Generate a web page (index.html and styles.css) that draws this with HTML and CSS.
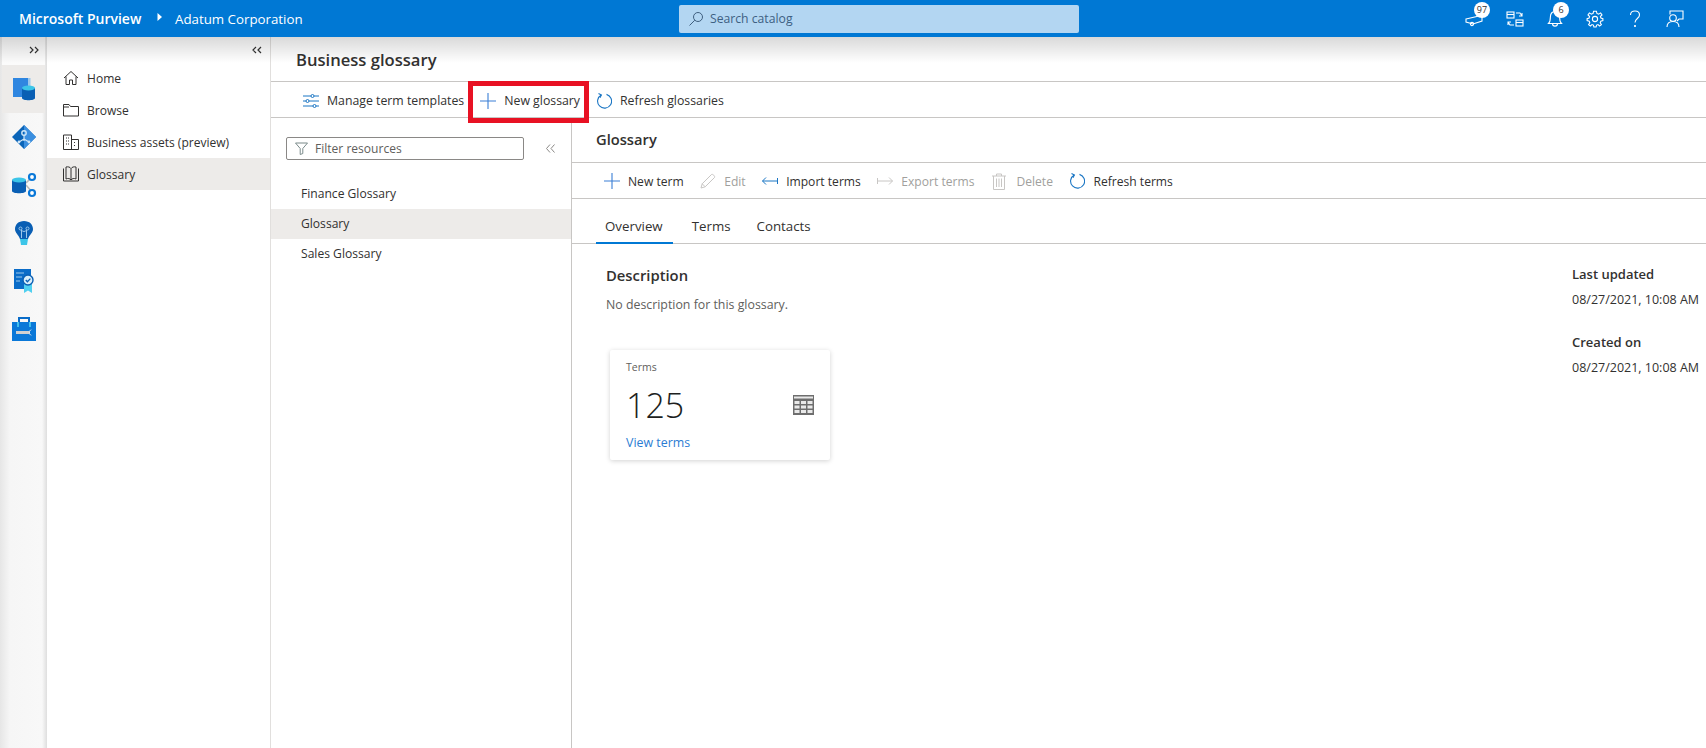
FILE: index.html
```html
<!DOCTYPE html>
<html lang="en">
<head>
<meta charset="utf-8">
<title>Business glossary</title>
<link rel="stylesheet" href="styles.css">
</head>
<body>
<header class="topbar">
  <div class="brand">
    <span class="brand-name">Microsoft Purview</span>
    <svg class="brand-caret" width="6" height="10" viewBox="0 0 6 10"><path d="M0.5 1 L5 5 L0.5 9 Z" fill="#fff"/></svg>
    <span class="brand-org">Adatum Corporation</span>
  </div>
  <div class="search">
    <svg width="16" height="16" viewBox="0 0 16 16" fill="none" stroke="#3f5f7f" stroke-width="1"><circle cx="10" cy="6" r="4.5"/><path d="M6.8 9.2 L1.5 14.5"/></svg>
    <span>Search catalog</span>
  </div>
  <div class="top-icons">
    <div class="top-icon">
      <svg width="20" height="16" viewBox="0 0 20 16" fill="none" stroke="#fff" stroke-width="1.1"><path d="M1 8 L14 5 L17 4 L17 10 L8 13 L1 11 Z"/><circle cx="7" cy="13" r="1.6"/></svg>
      <span class="badge badge-a">97</span>
    </div>
    <div class="top-icon">
      <svg width="18" height="16" viewBox="0 0 18 16" fill="none" stroke="#fff" stroke-width="1.1"><rect x="1" y="1" width="7" height="6"/><path d="M1 3.5 H8"/><rect x="10" y="9" width="7" height="6"/><path d="M10 11.5 H17"/><path d="M10 2 H14 L16 5 M16 2 V5 H13"/><path d="M8 14 H4 L2 11 M2 14 V11 H5"/></svg>
    </div>
    <div class="top-icon">
      <svg width="16" height="17" viewBox="0 0 16 17" fill="none" stroke="#fff" stroke-width="1.1"><path d="M1.5 13.5 H14.5 C13 12 12.6 10 12.6 7 C12.6 4 11 1.5 8 1.5 C5 1.5 3.4 4 3.4 7 C3.4 10 3 12 1.5 13.5 Z"/><path d="M5.5 13.5 C5.5 17 10.5 17 10.5 13.5"/></svg>
      <span class="badge badge-b">6</span>
    </div>
    <div class="top-icon">
      <svg width="18" height="18" viewBox="0 0 18 18" fill="none" stroke="#fff" stroke-width="1.1"><circle cx="9" cy="9" r="2.6"/><path d="M7.6 1.2 H10.4 L10.9 3.4 L12.6 4.1 L14.6 2.9 L16 4.9 L14.4 6.5 L14.9 8 L16.9 8.7 V10.6 L14.8 11.2 L14.2 12.8 L15.4 14.7 L13.6 16 L12 14.6 L10.6 15.1 L10.1 17 H7.9 L7.4 15.1 L6 14.6 L4.4 16 L2.6 14.7 L3.8 12.8 L3.2 11.2 L1.1 10.6 V8.7 L3.1 8 L3.6 6.5 L2 4.9 L3.4 2.9 L5.4 4.1 L7.1 3.4 Z"/></svg>
    </div>
    <div class="top-icon">
      <svg width="12" height="18" viewBox="0 0 12 18" fill="none" stroke="#fff" stroke-width="1.1"><path d="M1.5 5 C1.5 2.4 3.4 1 6 1 C8.6 1 10.5 2.6 10.5 5 C10.5 8.5 6 8.5 6 12.5"/><circle cx="6" cy="16" r="0.5" fill="#fff"/></svg>
    </div>
    <div class="top-icon">
      <svg width="18" height="18" viewBox="0 0 18 18" fill="none" stroke="#fff" stroke-width="1.1"><path d="M4 4.5 V1 H17 V9 H13 L11 11"/><circle cx="7" cy="8" r="3.3"/><path d="M1 17 C1 13 3.5 11.5 7 11.5 C10.5 11.5 13 13 13 17"/></svg>
    </div>
  </div>
</header>

<div class="shell">
  <aside class="rail">
    <div class="rail-top">
      <svg class="chev" width="10" height="8" viewBox="0 0 10 8" fill="none" stroke="#333" stroke-width="1.2"><path d="M1 1 L4 4 L1 7 M6 1 L9 4 L6 7"/></svg>
    </div>
    <div class="rail-item rail-item-on">
      <svg width="26" height="26" viewBox="0 0 26 26"><rect x="2" y="2" width="17" height="19" fill="#2f86e0"/><rect x="17" y="2" width="2.5" height="19" fill="#9cc7ea"/><path d="M11 12 V22 C11 25 24 25 24 22 V12 Z" fill="#0a5fb4"/><ellipse cx="17.5" cy="12" rx="6.5" ry="2.6" fill="#3cc5e8"/></svg>
    </div>
    <div class="rail-item">
      <svg width="26" height="26" viewBox="0 0 26 26"><path d="M13 1 L25 13 L13 25 L1 13 Z" fill="#0a64b8"/><path d="M13 1 L25 13 L13 25 Z" fill="#3b8fe0"/><circle cx="13" cy="9" r="2.2" fill="none" stroke="#cfe6f7" stroke-width="1.4"/><path d="M13 11 V17 M13 15 L8 18 M13 15 L18 18" stroke="#cfe6f7" stroke-width="1.2" fill="none"/><circle cx="8" cy="18" r="1.4" fill="#cfe6f7"/><circle cx="18" cy="18" r="1.4" fill="#cfe6f7"/></svg>
    </div>
    <div class="rail-item">
      <svg width="26" height="26" viewBox="0 0 26 26"><path d="M15 11 L21 5 M15 13 L21 20" stroke="#b8b8b8" stroke-width="1.6"/><path d="M1 8 V19 C1 22 15 22 15 19 V8 Z" fill="#0a5fb4"/><ellipse cx="8" cy="8" rx="7" ry="2.6" fill="#3cc5e8"/><circle cx="21" cy="5" r="3" fill="#fff" stroke="#0a78d8" stroke-width="2.2"/><circle cx="21" cy="21" r="3" fill="#fff" stroke="#0a78d8" stroke-width="2.2"/></svg>
    </div>
    <div class="rail-item">
      <svg width="20" height="26" viewBox="0 0 20 26"><path d="M10 1 C4.5 1 1 4.600 1 9 C1 13 4.500 14.500 6 19 H14 C15.500 14.500 19 13 19 9 C19 4.600 15.500 1 10 1 Z" fill="#0a5fb4"/><path d="M6 19 H14 L13 25 H7 Z" fill="#3cc5e8"/><path d="M7.500 10 V18 M12.500 10 V18 M7.500 10 C9 12 11 12 12.500 10" stroke="#9cc7ea" stroke-width="1" fill="none"/><circle cx="6.500" cy="8.500" r="1.500" fill="none" stroke="#9cc7ea"/><circle cx="13.500" cy="8.500" r="1.500" fill="none" stroke="#9cc7ea"/></svg>
    </div>
    <div class="rail-item">
      <svg width="24" height="26" viewBox="0 0 24 26"><rect x="2" y="1" width="17" height="20" fill="#0a6cc8"/><path d="M4 5 H12 M4 9 H10 M4 13 H8" stroke="#9cc7ea" stroke-width="1.2"/><path d="M12 16 V25 L16 22.500 L20 25 V16 Z" fill="#50d0f0"/><circle cx="16" cy="12" r="5" fill="#d9eefa" stroke="#0a5fb4" stroke-width="1.400"/><path d="M13.800 12 L15.400 13.800 L18.400 10.600" stroke="#0a5fb4" stroke-width="1.300" fill="none"/></svg>
    </div>
    <div class="rail-item">
      <svg width="26" height="26" viewBox="0 0 26 26"><path d="M8 6 V2 H18 V6" fill="none" stroke="#0a6cc8" stroke-width="2"/><rect x="1" y="6" width="24" height="19" fill="#0a78d8"/><path d="M7 6 V11 M19 6 V11" stroke="#50d0f0" stroke-width="1.600"/><rect x="5" y="15" width="13" height="3" fill="#d0d0d0"/><path d="M21 13.500 A3 3 0 1 0 21 19.500 L19 18 V15 Z" fill="#e8e8e8"/></svg>
    </div>
  </aside>

  <nav class="nav">
    <div class="nav-top">
      <svg class="chev" width="10" height="8" viewBox="0 0 10 8" fill="none" stroke="#333" stroke-width="1.2"><path d="M4 1 L1 4 L4 7 M9 1 L6 4 L9 7"/></svg>
    </div>
    <div class="nav-item">
      <svg width="16" height="16" viewBox="0 0 16 16" fill="none" stroke="#323130"><path d="M1 8 L8 1.500 L15 8 M3 6.500 V14.500 H6.500 V10 H9.500 V14.500 H13 V6.500"/></svg>
      <span>Home</span>
    </div>
    <div class="nav-item">
      <svg width="16" height="16" viewBox="0 0 16 16" fill="none" stroke="#323130"><path d="M0.500 14 V2.500 H6 L7.500 4.500 H15.500 V14 Z M0.500 5 H6"/></svg>
      <span>Browse</span>
    </div>
    <div class="nav-item">
      <svg width="16" height="16" viewBox="0 0 16 16" fill="none" stroke="#323130"><path d="M0.500 15.500 V1 H8.500 V15.500 M8.500 5.500 H15.500 V15.500 H0.500"/><path d="M3 4 H6 M3 7 H6 M3 10 H6 M11 8.500 H13 M11 11.500 H13" stroke-dasharray="1 1"/></svg>
      <span>Business assets (preview)</span>
    </div>
    <div class="nav-item nav-item-on">
      <svg width="16" height="16" viewBox="0 0 16 16" fill="none" stroke="#323130"><path d="M0.500 2.500 V15 H15.500 V2.500 M3 1 V13 C5 12 7 12.500 8 14 C9 12.500 11 12 13 13 V1 C11 0.500 9 1 8 2.500 C7 1 5 0.500 3 1 Z M8 2.500 V14"/></svg>
      <span>Glossary</span>
    </div>
  </nav>

  <main class="main">
    <h1 class="page-title">Business glossary</h1>
    <div class="toolbar toolbar-main">
      <button class="tool">
        <svg width="16" height="16" viewBox="0 0 16 16" fill="none" stroke="#1b76c4"><path d="M0 3 H8 M11 3 H16 M0 8 H3 M6 8 H16 M0 13 H10 M13 13 H16"/><circle cx="9.500" cy="3" r="1.500"/><circle cx="4.500" cy="8" r="1.500"/><circle cx="11.500" cy="13" r="1.500"/></svg>
        <span>Manage term templates</span>
      </button>
      <button class="tool tool-marked">
        <svg width="16" height="16" viewBox="0 0 16 16" fill="none" stroke="#3a7fd5" stroke-width="1.1"><path d="M8 0 V16 M0 8 H16"/></svg>
        <span>New glossary</span>
        <span class="mark"></span>
      </button>
      <button class="tool">
        <svg width="16" height="16" viewBox="0 0 16 16" fill="none" stroke="#1b76c4" stroke-width="1.1"><path d="M5.200 2 A7 7 0 1 0 10.500 1.400"/><path d="M2.500 0.500 L5.400 2 L4 4.800"/></svg>
        <span>Refresh glossaries</span>
      </button>
    </div>
    <div class="split">
      <section class="list-pane">
        <div class="filter-row">
          <div class="filter">
            <svg width="13" height="13" viewBox="0 0 13 13" fill="none" stroke="#7a8a8a"><path d="M0.500 1 H12.500 L7.800 6.500 V11.500 L5.200 12.500 V6.500 Z"/></svg>
            <span>Filter resources</span>
          </div>
          <svg class="filter-chev" width="9" height="9" viewBox="0 0 9 9" fill="none" stroke="#8a8886"><path d="M4 0.500 L0.500 4.500 L4 8.500 M8.500 0.500 L5 4.500 L8.500 8.500"/></svg>
        </div>
        <ul class="glossaries">
          <li>Finance Glossary</li>
          <li class="on">Glossary</li>
          <li>Sales Glossary</li>
        </ul>
      </section>
      <section class="detail">
        <h2 class="detail-title">Glossary</h2>
        <div class="toolbar toolbar-detail">
          <button class="tool">
            <svg width="16" height="16" viewBox="0 0 16 16" fill="none" stroke="#3a7fd5" stroke-width="1.1"><path d="M8 0 V16 M0 8 H16"/></svg>
            <span>New term</span>
          </button>
          <button class="tool tool-off">
            <svg width="16" height="16" viewBox="0 0 16 16" fill="none" stroke="#c8c6c4"><path d="M1 15 L2.200 10.800 L11.500 1.500 C12.500 0.500 15.500 3.500 14.500 4.500 L5.200 13.800 Z M2.200 10.800 L5.200 13.800"/></svg>
            <span>Edit</span>
          </button>
          <button class="tool">
            <svg width="16" height="16" viewBox="0 0 16 16" fill="none" stroke="#1b76c4"><path d="M16 8 H0.500 M4 4.500 L0.500 8 L4 11.500 M15.500 5 V11"/></svg>
            <span>Import terms</span>
          </button>
          <button class="tool tool-off">
            <svg width="16" height="16" viewBox="0 0 16 16" fill="none" stroke="#c8c6c4"><path d="M0 8 H15.500 M12 4.500 L15.500 8 L12 11.500 M0.500 5 V11"/></svg>
            <span>Export terms</span>
          </button>
          <button class="tool tool-off tool-delete">
            <svg width="14" height="17" viewBox="0 0 14 17" fill="none" stroke="#c8c6c4"><path d="M0 3 H14 M4.500 3 V1 H9.500 V3 M1.500 3 V16.500 H12.500 V3 M4.500 5.500 V14 M7 5.500 V14 M9.500 5.500 V14"/></svg>
            <span>Delete</span>
          </button>
          <button class="tool">
            <svg width="16" height="16" viewBox="0 0 16 16" fill="none" stroke="#1b76c4" stroke-width="1.1"><path d="M5.200 2 A7 7 0 1 0 10.500 1.400"/><path d="M2.500 0.500 L5.400 2 L4 4.800"/></svg>
            <span>Refresh terms</span>
          </button>
        </div>
        <div class="tabs">
          <span class="tab tab-on">Overview</span>
          <span class="tab">Terms</span>
          <span class="tab">Contacts</span>
        </div>
        <div class="overview">
          <div class="ov-left">
            <h3 class="ov-heading ov-heading-lg">Description</h3>
            <p class="ov-text">No description for this glossary.</p>
            <div class="card">
              <div class="card-label">Terms</div>
              <div class="card-row">
                <span class="card-num">125</span>
                <svg width="21" height="20" viewBox="0 0 21 20"><rect width="21" height="20" fill="#6e6e6e"/><g fill="#e9e9e9"><rect x="1" y="1.500" width="19" height="2"/><rect x="1.500" y="6" width="5" height="3"/><rect x="8" y="6" width="5" height="3"/><rect x="14.500" y="6" width="5" height="3"/><rect x="1.500" y="10.500" width="5" height="3"/><rect x="8" y="10.500" width="5" height="3"/><rect x="14.500" y="10.500" width="5" height="3"/><rect x="1.500" y="15" width="5" height="3"/><rect x="8" y="15" width="5" height="3"/><rect x="14.500" y="15" width="5" height="3"/></g></svg>
              </div>
              <a class="card-link">View terms</a>
            </div>
          </div>
          <div class="ov-right">
            <h3 class="ov-heading">Last updated</h3>
            <p class="ov-date">08/27/2021, 10:08 AM</p>
            <h3 class="ov-heading ov-heading-gap">Created on</h3>
            <p class="ov-date">08/27/2021, 10:08 AM</p>
          </div>
        </div>
      </section>
    </div>
  </main>
</div>
<div class="top-shadow"></div>
</body>
</html>
```

FILE: styles.css
```css
* { box-sizing: border-box; }
html, body { margin: 0; height: 100%; overflow: hidden; }
body {
  font-family: "Open Sans", "Noto Sans", sans-serif;
  font-size: 12px;
  color: #323130;
  background: #fff;
  display: flex;
  flex-direction: column;
}
h1, h2, h3, p, ul { margin: 0; padding: 0; }

.topbar {
  height: 37px;
  flex: none;
  background: #0078d4;
  display: flex;
  align-items: center;
  color: #fff;
}
.brand { width: 679px; flex: none; padding-left: 19px; display: flex; align-items: center; }
.brand-name { font-weight: 600; font-size: 14px; width: 138px; }
.brand-caret { margin-right: 12px; margin-bottom: 3px; }
.brand-org { font-size: 13.3px; font-weight: 400; }
.search {
  width: 400px;
  height: 28px;
  background: #b3d6f2;
  border-radius: 2px;
  display: flex;
  align-items: center;
  padding-left: 9px;
  gap: 6px;
  color: #3d5f82;
  font-size: 12.2px;
}
.top-icons { margin-left: auto; padding-right: 11px; display: flex; }
.top-icon {
  width: 40px;
  height: 37px;
  display: flex;
  align-items: center;
  justify-content: center;
  position: relative;
}
.badge {
  position: absolute;
  top: 2px;
  width: 16px;
  height: 16px;
  border-radius: 50%;
  background: #fff;
  color: #323130;
  font-size: 9px;
  line-height: 16px;
  text-align: center;
}
.badge-a { left: 19px; }
.badge-b { left: 18px; }

.shell { flex: 1; display: flex; min-height: 0; }

.rail {
  width: 47px;
  flex: none;
  background: linear-gradient(90deg, #e6e6e6 0, #f6f6f6 10px, #f8f8f8 42px, #dedede 47px);
}
.rail-top { height: 28px; display: flex; align-items: center; justify-content: flex-end; padding: 0 6px 2px 0; background: #fbfbfb; margin: 0 2px; }
.rail-item { height: 48px; display: flex; align-items: center; justify-content: center; margin: 0 2px; }
.rail-item-on { background: #edebe9; }

.nav { width: 224px; flex: none; border-right: 1px solid #e1dfdd; }
.nav-top { height: 25px; display: flex; align-items: center; justify-content: flex-end; padding: 0 8px 0 0; }
.nav-item { height: 32px; display: flex; align-items: center; gap: 8px; padding-left: 16px; font-size: 12.05px; }
.nav-item-on { background: #edebe9; }

.main { flex: 1; min-width: 0; display: flex; flex-direction: column; }
.page-title {
  height: 45px;
  flex: none;
  padding: 12px 0 0 25px;
  font-size: 16.6px;
  font-weight: 600;
  line-height: 22px;
  border-bottom: 1px solid #c8c6c4;
}
.toolbar { display: flex; align-items: center; flex: none; border-bottom: 1px solid #c8c6c4; }
.toolbar-main { height: 36px; padding: 2px 0 0 32px; gap: 16px; font-size: 12.3px; }
.toolbar-detail { height: 36px; padding: 1px 0 0 32px; gap: 16.5px; font-size: 12.1px; }
.tool {
  border: 0;
  background: none;
  padding: 0;
  font-family: inherit;
  font-size: inherit;
  color: #323130;
  display: flex;
  align-items: center;
  gap: 8px;
  position: relative;
}
.tool-off { color: #a19f9d; }
.tool-delete { gap: 10px; margin-left: 1.5px; }
.mark {
  position: absolute;
  left: -12px;
  top: calc(50% - 20px);
  width: 121px;
  height: 42px;
  border: 5px solid #e81123;
}

.split { flex: 1; display: flex; min-height: 0; }
.list-pane { width: 301px; flex: none; border-right: 1px solid #c8c6c4; }
.filter-row { display: flex; align-items: center; padding: 19px 0 0 15px; }
.filter {
  width: 238px;
  height: 23px;
  border: 1px solid #8a8886;
  border-radius: 2px;
  display: flex;
  align-items: center;
  gap: 7px;
  padding-left: 8px;
  font-size: 12.05px;
  color: #605e5c;
}
.filter-chev { margin-left: 22px; }
.glossaries { list-style: none; margin-top: 19px; }
.glossaries li { height: 30px; line-height: 30px; padding-left: 30px; font-size: 12.1px; }
.glossaries .on { background: #edebe9; }

.detail { flex: 1; min-width: 0; display: flex; flex-direction: column; }
.detail-title {
  height: 45px;
  flex: none;
  padding: 10px 0 0 24px;
  font-size: 14.7px;
  font-weight: 600;
  line-height: 22px;
  border-bottom: 1px solid #c8c6c4;
}
.tabs {
  height: 45px;
  flex: none;
  display: flex;
  padding-left: 24px;
  border-bottom: 1px solid #c8c6c4;
}
.tab { padding: 0 9px; margin-right: 8px; line-height: 54px; font-size: 13.3px; height: 45px; }
.tab-on { border-bottom: 2px solid #0078d4; padding-right: 10px; margin-right: 10px; }

.overview { flex: 1; display: flex; padding-left: 34px; }
.ov-left { flex: 1; padding-top: 21px; }
.ov-right { width: 134px; flex: none; padding-top: 20px; white-space: nowrap; }
.ov-heading { font-size: 13px; font-weight: 600; line-height: 20px; }
.ov-heading-lg { font-size: 14.8px; }
.ov-heading-gap { margin-top: 23px; }
.ov-text { font-size: 12.35px; line-height: 18px; margin-top: 11px; color: #605e5c; }
.ov-date { font-size: 12.5px; line-height: 18px; margin-top: 7px; color: #323130; }
.card {
  margin: 36px 0 0 4px;
  width: 220px;
  height: 110px;
  border-radius: 2px;
  box-shadow: 0 1px 5px rgba(0, 0, 0, .18);
  padding: 10px 16px 0;
}
.card-label { font-size: 10.5px; line-height: 14px; color: #605e5c; }
.card-row { display: flex; align-items: center; justify-content: space-between; height: 50px; margin-top: 6px; }
.card-num { font-size: 34px; font-weight: 300; color: #201f1e; line-height: 50px; }
.card-link { display: block; margin-top: 4px; color: #2b7cd3; font-size: 12.4px; line-height: 18px; }

.top-shadow {
  position: absolute;
  left: 0;
  right: 0;
  top: 37px;
  height: 26px;
  background: linear-gradient(180deg, rgba(0,0,0,.15), rgba(0,0,0,0));
  pointer-events: none;
}
```
